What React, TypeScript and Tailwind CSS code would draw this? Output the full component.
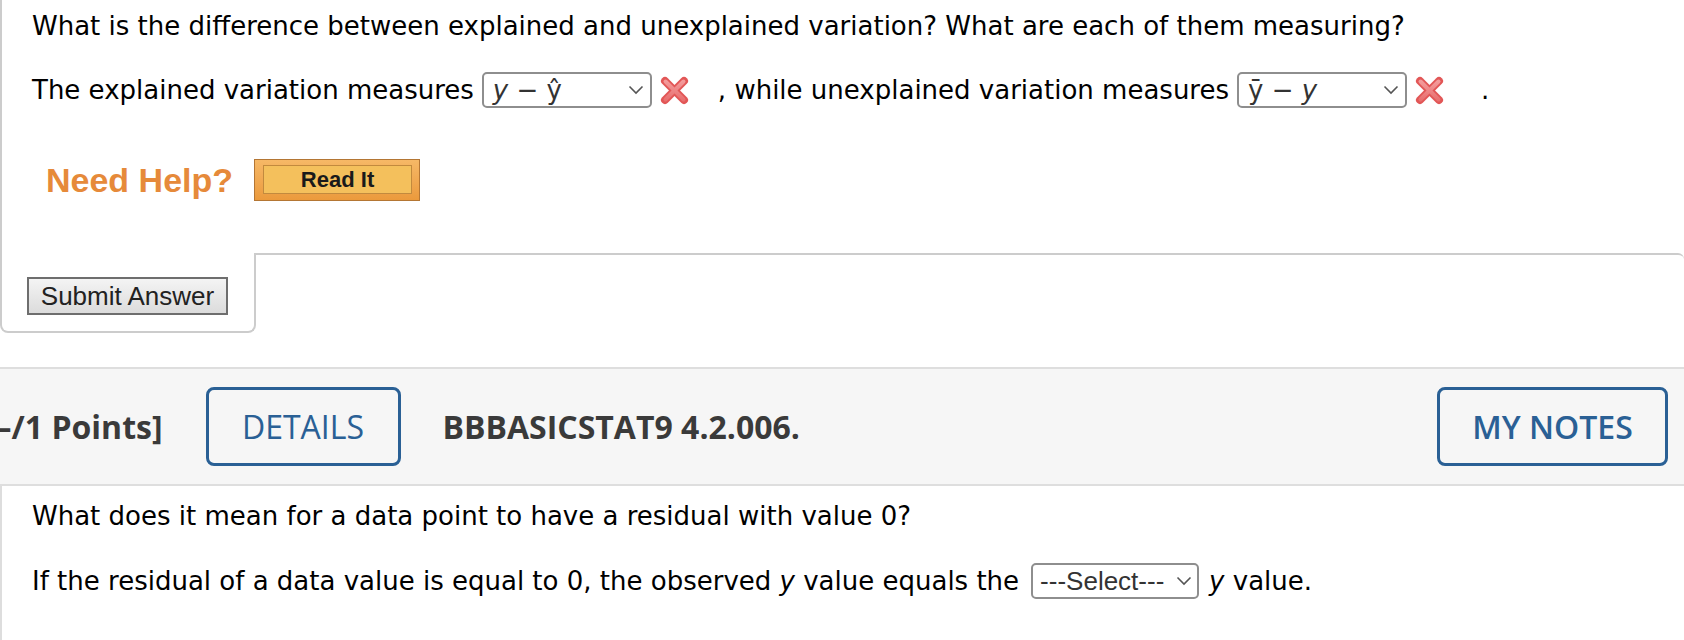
import React from "react";

const Chevron = () => (
  <svg width="16" height="10" viewBox="0 0 16 10" className="shrink-0">
    <polyline points="1.5,1.5 8,8 14.5,1.5" fill="none" stroke="#555" strokeWidth="1.6" />
  </svg>
);

const RedX = () => (
  <svg width="31" height="29" viewBox="0 0 31 29" className="shrink-0">
    <defs>
      <linearGradient id="xg" x1="0" y1="0" x2="0" y2="1">
        <stop offset="0" stopColor="#f39a9a" />
        <stop offset="1" stopColor="#e87070" />
      </linearGradient>
    </defs>
    <g strokeLinecap="round">
      <line x1="6" y1="5" x2="25" y2="24" stroke="#e25656" strokeWidth="8" />
      <line x1="25" y1="5" x2="6" y2="24" stroke="#e25656" strokeWidth="8" />
      <line x1="6.5" y1="5.5" x2="24.5" y2="23.5" stroke="url(#xg)" strokeWidth="4" />
      <line x1="24.5" y1="5.5" x2="6.5" y2="23.5" stroke="url(#xg)" strokeWidth="4" />
    </g>
  </svg>
);

const Select = ({ children }: { children: React.ReactNode }) => (
  <div className="w-[170px] h-[36px] shrink-0 border-2 border-[#8e8e8e] rounded-[5px] bg-white flex items-center justify-between pl-[9px] pr-[6px] text-[#333]">
    <span className="whitespace-nowrap leading-none">{children}</span>
    <Chevron />
  </div>
);

export default function App() {
  return (
    <div className="w-[1684px] h-[640px] overflow-hidden bg-white text-black" style={{ fontFamily: '"DejaVu Sans", Verdana, sans-serif' }}>
      {/* Section 1 */}
      <div className="flex flex-col">
        <div className="border-l-2 border-[#cccccc] pl-[30px] pt-[8px] pb-[52px] text-[26px]">
          <div className="h-[36px] leading-[36px] whitespace-nowrap">
            What is the difference between explained and unexplained variation? What are each of them measuring?
          </div>
          <div className="mt-[28px] h-[36px] flex items-center whitespace-nowrap leading-[36px]">
            <span>The explained variation measures</span>
            <div className="ml-[8px]">
              <Select>
                <i>y</i> − ŷ
              </Select>
            </div>
            <div className="ml-[7px]"><RedX /></div>
            <span className="ml-[28px]">, while unexplained variation measures</span>
            <div className="ml-[8px]">
              <Select>
                ȳ − <i>y</i>
              </Select>
            </div>
            <div className="ml-[7px]"><RedX /></div>
            <span className="ml-[36px]">.</span>
          </div>
          <div className="mt-[51px] h-[42px] flex items-center">
            <span
              className="ml-[14px] text-[34px] font-bold text-[#e68a3a] leading-none"
              style={{ fontFamily: '"Liberation Sans", Arial, sans-serif' }}
            >
              Need Help?
            </span>
            <div className="ml-[21px] w-[166px] h-[42px] border border-[#b47634] bg-gradient-to-b from-[#f6b866] to-[#eb9a3c] pl-[8px] pr-[7px] pt-[5px] pb-[6px]">
              <div
                className="w-full h-full border border-[#c28a3e] bg-[#f4c05c] flex items-center justify-center text-[22px] font-bold text-[#1a1a1a] leading-none"
                style={{ fontFamily: '"Liberation Sans", Arial, sans-serif' }}
              >
                Read It
              </div>
            </div>
          </div>
        </div>
        <div className="flex">
          <div className="w-[256px] h-[80px] border-l-2 border-r-2 border-b-2 border-[#cccccc] rounded-b-[8px] pl-[25px] pt-[24px]">
            <div
              className="w-[201px] h-[38px] border-2 border-[#6e6e6e] bg-gradient-to-b from-[#f4f4f4] to-[#dcdcdc] flex items-center justify-center text-[26px] text-[#222] leading-none"
              style={{ fontFamily: '"Liberation Sans", Arial, sans-serif' }}
            >
              Submit Answer
            </div>
          </div>
          <div className="flex-1 h-[80px] border-t-2 border-[#cccccc] rounded-tr-[6px]" />
        </div>
      </div>

      {/* Section 2 header */}
      <div
        className="mt-[34px] h-[119px] border-t-2 border-b-2 border-[#dedede] bg-[#f6f6f6] flex items-center text-[32px] text-[#3a3a3a] overflow-hidden"
        style={{ fontFamily: '"Open Sans", sans-serif' }}
      >
        <span className="font-bold whitespace-nowrap ml-[-15px]">[–/1 Points]</span>
        <div className="ml-[43px] w-[195px] h-[79px] shrink-0 border-[3px] border-[#2a6095] rounded-[8px] flex items-center justify-center text-[#2a6095] font-medium">
          DETAILS
        </div>
        <span className="ml-[42px] font-bold whitespace-nowrap">BBBASICSTAT9 4.2.006.</span>
        <div className="ml-auto mr-[16px] w-[231px] h-[79px] shrink-0 border-[3px] border-[#2a6095] rounded-[8px] flex items-center justify-center text-[#2a6095] font-semibold">
          MY NOTES
        </div>
      </div>

      {/* Section 3 */}
      <div className="border-l-2 border-[#dddddd] pl-[30px] pt-[12px] h-[200px] text-[26px]">
        <div className="h-[36px] leading-[36px] whitespace-nowrap">
          What does it mean for a data point to have a residual with value 0?
        </div>
        <div className="mt-[29px] h-[36px] flex items-center whitespace-nowrap leading-[36px]">
          <span>If the residual of a data value is equal to 0, the observed <i>y</i> value equals the</span>
          <div className="ml-[12px]">
            <div
              className="w-[168px] h-[36px] border-2 border-[#8e8e8e] rounded-[5px] bg-white flex items-center justify-between pl-[7px] pr-[5px] text-[26px] text-[#333]"
              style={{ fontFamily: '"Liberation Sans", Arial, sans-serif' }}
            >
              <span className="leading-none">---Select---</span>
              <Chevron />
            </div>
          </div>
          <span className="ml-[10px]"><i>y</i> value.</span>
        </div>
      </div>
    </div>
  );
}
